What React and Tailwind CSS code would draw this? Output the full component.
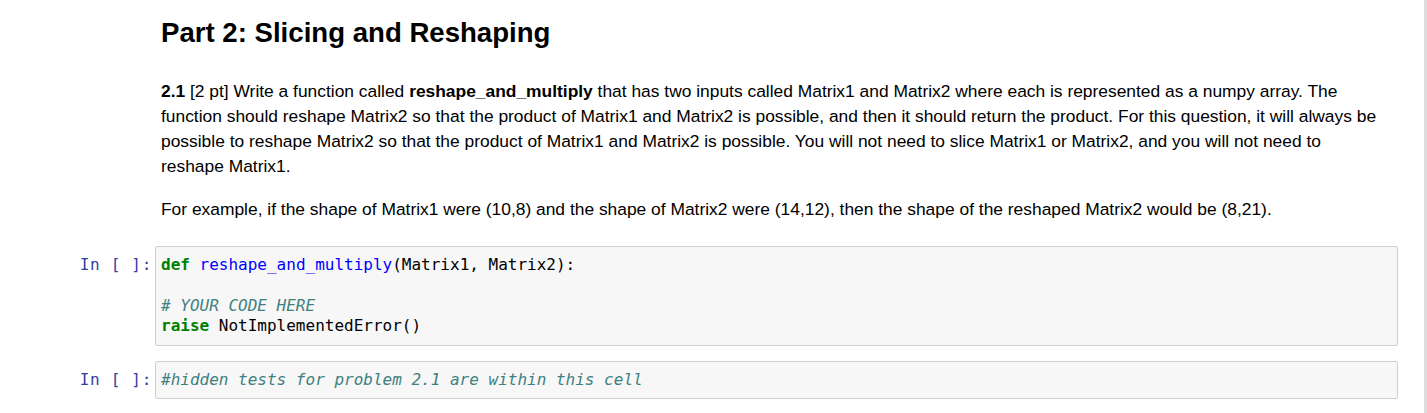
const Prompt = ({ children }) => (
    <div className="w-[155px] shrink-0 pr-[3px] pt-[9px] text-right font-['DejaVu_Sans_Mono',monospace] text-[16px] leading-[20.4px] tracking-[0.7px] text-[#303f9f]">
        {children}
    </div>
);

const CodeBox = ({ children }) => (
    <div className="flex-1 rounded-[2px] border border-[#cfcfcf] bg-[#f7f7f7] px-[5px] py-2 font-['DejaVu_Sans_Mono',monospace] text-[16px] leading-[20.4px] text-black whitespace-pre">
        {children}
    </div>
);

const App = () => {
    return (
        <div className="flex h-[413px] w-full overflow-hidden bg-white">
            <div className="flex-1 pr-[26px]">
                {/* markdown cell */}
                <div className="pl-[161px] text-black font-['Liberation_Sans',Arial,sans-serif]">
                    <h2 className="pt-4 text-[27.6px] font-bold leading-[34px]">
                        Part 2: Slicing and Reshaping
                    </h2>
                    <p className="mt-[29px] text-[17.4px] leading-[25px]">
                        <b>2.1</b> [2 pt] Write a function called <b>reshape_and_multiply</b> that has two inputs called Matrix1 and Matrix2 where each is represented as a numpy array. The
                        <br />
                        function should reshape Matrix2 so that the product of Matrix1 and Matrix2 is possible, and then it should return the product. For this question, it will always be
                        <br />
                        possible to reshape Matrix2 so that the product of Matrix1 and Matrix2 is possible. You will not need to slice Matrix1 or Matrix2, and you will not need to
                        <br />
                        reshape Matrix1.
                    </p>
                    <p className="mt-[18px] text-[17.4px] leading-[25px]">
                        For example, if the shape of Matrix1 were (10,8) and the shape of Matrix2 were (14,12), then the shape of the reshaped Matrix2 would be (8,21).
                    </p>
                </div>

                {/* code cell */}
                <div className="mt-6 flex">
                    <Prompt>In [ ]:</Prompt>
                    <CodeBox>
                        <span className="font-bold text-[#008000]">def</span>{" "}
                        <span className="text-[#0000ff]">reshape_and_multiply</span>(Matrix1, Matrix2):
                        {"\n\n"}
                        <span className="italic text-[#408080]"># YOUR CODE HERE</span>
                        {"\n"}
                        <span className="font-bold text-[#008000]">raise</span> NotImplementedError()
                    </CodeBox>
                </div>

                {/* hidden tests cell */}
                <div className="mt-[15px] flex">
                    <Prompt>In [ ]:</Prompt>
                    <CodeBox>
                        <span className="italic text-[#408080]">#hidden tests for problem 2.1 are within this cell</span>
                    </CodeBox>
                </div>
            </div>
            <div className="w-[3px] shrink-0 bg-[#dddddd]" />
        </div>
    );
};

export default App;
